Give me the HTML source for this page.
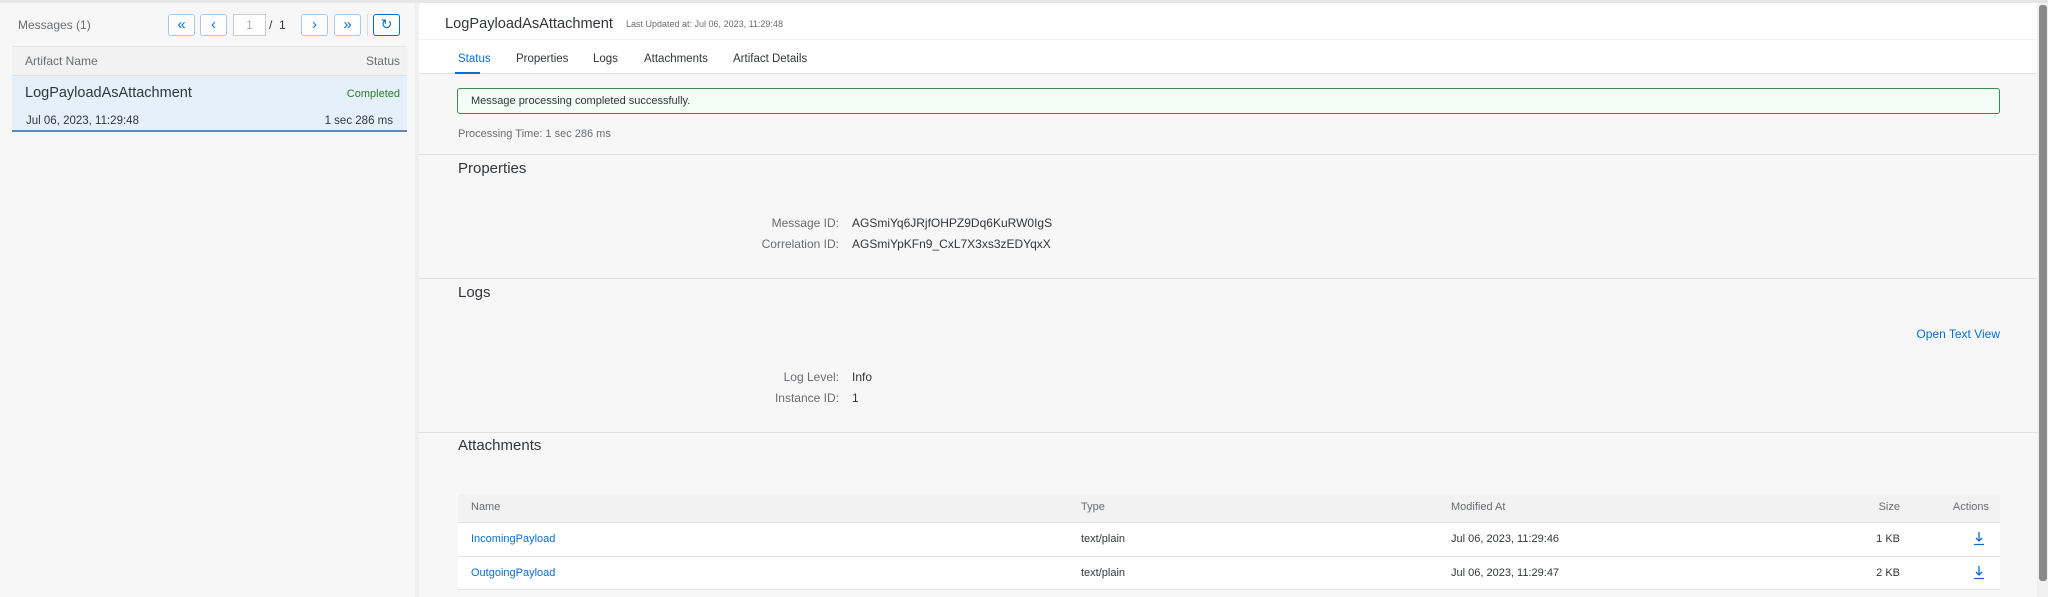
<!DOCTYPE html>
<html><head><meta charset="utf-8"><style>
*{margin:0;padding:0;box-sizing:border-box}
body{width:2048px;height:597px;overflow:hidden;background:#f7f7f7;font-family:"Liberation Sans",sans-serif;color:#32363a;position:relative;font-size:12px}
.a{position:absolute;white-space:nowrap}
.btn{position:absolute;top:14px;width:27px;height:22px;border:1px solid #a9c8e8;border-radius:3px;background:#fff;color:#0a6ed1;font-size:15px;text-align:center;line-height:19px}
.lbl{position:absolute;right:1209px;color:#6a6d70;font-size:12px;white-space:nowrap}
.val{position:absolute;left:852px;font-size:12px;white-space:nowrap}
.hr{position:absolute;left:419px;right:11px;height:1px;background:#e0e0e0}
.sec{position:absolute;left:458px;font-size:15px;color:#32363a}
.link{color:#0a6ed1}
</style></head><body>
<div class="a" style="left:0;top:0;width:2048px;height:3px;background:#e6e6e6"></div>
<!-- left panel -->
<div class="a" style="left:0;top:3px;width:415px;height:594px;background:#f7f7f7"></div>
<div class="a" style="left:415px;top:3px;width:4px;height:594px;background:#f0f0f0"></div>
<div class="a" style="left:18px;top:18px;font-size:12px;color:#6a6d70">Messages (1)</div>
<div class="btn" style="left:168px">«</div>
<div class="btn" style="left:200px">‹</div>
<div class="a" style="left:233px;top:14px;width:33px;height:22px;border:1px solid #ccc;background:#fff;color:#aaa;text-align:center;line-height:20px;font-size:12px">1</div>
<div class="a" style="left:269px;top:18px;font-size:12px">/&nbsp;&nbsp;1</div>
<div class="btn" style="left:301px">›</div>
<div class="btn" style="left:334px">»</div>
<div class="a" style="left:367px;top:14px;width:1px;height:22px;background:#ddd"></div>
<div class="btn" style="left:373px;border-color:#0a6ed1;font-size:14px">↻</div>
<div class="a" style="left:12px;top:46px;width:395px;height:30px;background:#f2f2f2;border-top:1px solid #e5e5e5;border-bottom:1px solid #e0e0e0"></div>
<div class="a" style="left:25px;top:54px;font-size:12px;color:#6a6d70">Artifact Name</div>
<div class="a" style="right:1648px;top:54px;font-size:12px;color:#6a6d70">Status</div>
<div class="a" style="left:12px;top:76px;width:395px;height:56px;background:#e5f0fa;border-bottom:2px solid #5a8cc0"></div>
<div class="a" style="left:25px;top:85px;font-size:14.5px">LogPayloadAsAttachment</div>
<div class="a" style="right:1648px;top:88px;font-size:11px;color:#2b7d2b">Completed</div>
<div class="a" style="left:26px;top:115px;font-size:11.5px">Jul 06, 2023, 11:29:48</div>
<div class="a" style="right:1655px;top:115px;font-size:11.5px">1 sec 286 ms</div>
<!-- right header -->
<div class="a" style="left:419px;top:3px;width:1618px;height:71px;background:#fff;border-bottom:1px solid #e0e0e0"></div>
<div class="a" style="left:419px;top:39px;width:1618px;height:1px;background:#f3f3f3"></div>
<div class="a" style="left:445px;top:16px;font-size:14.6px">LogPayloadAsAttachment</div>
<div class="a" style="left:626px;top:19px;font-size:9px;color:#6a6d70">Last Updated at: Jul 06, 2023, 11:29:48</div>
<div class="a" style="left:458px;top:53px;font-size:11.5px;color:#0a6ed1">Status</div>
<div class="a" style="left:455px;top:72px;width:25px;height:2px;background:#0a6ed1"></div>
<div class="a" style="left:516px;top:53px;font-size:11.5px">Properties</div>
<div class="a" style="left:593px;top:53px;font-size:11.5px">Logs</div>
<div class="a" style="left:644px;top:53px;font-size:11.5px">Attachments</div>
<div class="a" style="left:733px;top:53px;font-size:11.5px">Artifact Details</div>
<!-- status -->
<div class="a" style="left:457px;top:88px;width:1543px;height:26px;background:#f1fdf6;border:1px solid #3c8a52;border-radius:3px"></div>
<div class="a" style="left:471px;top:95px;font-size:11px">Message processing completed successfully.</div>
<div class="a" style="left:458px;top:128px;font-size:11px;color:#6a6d70">Processing Time: 1 sec 286 ms</div>
<div class="hr" style="top:154px"></div>
<div class="sec" style="top:160px">Properties</div>
<div class="lbl" style="top:216px">Message ID:</div><div class="val" style="top:216px">AGSmiYq6JRjfOHPZ9Dq6KuRW0IgS</div>
<div class="lbl" style="top:237px">Correlation ID:</div><div class="val" style="top:237px">AGSmiYpKFn9_CxL7X3xs3zEDYqxX</div>
<div class="hr" style="top:278px"></div>
<div class="sec" style="top:284px">Logs</div>
<div class="a link" style="right:48px;top:327px;font-size:12px">Open Text View</div>
<div class="lbl" style="top:370px">Log Level:</div><div class="val" style="top:370px">Info</div>
<div class="lbl" style="top:391px">Instance ID:</div><div class="val" style="top:391px">1</div>
<div class="hr" style="top:432px"></div>
<div class="sec" style="top:437px">Attachments</div>
<!-- table -->
<div class="a" style="left:458px;top:494px;width:1542px;height:29px;background:#f2f2f2;border-bottom:1px solid #e0e0e0"></div>
<div class="a" style="left:458px;top:523px;width:1542px;height:67px;background:#fff"></div>
<div class="a" style="left:458px;top:556px;width:1542px;height:1px;background:#e5e5e5"></div>
<div class="a" style="left:458px;top:589px;width:1542px;height:1px;background:#e5e5e5"></div>
<div class="a" style="left:471px;top:501px;font-size:11px;color:#6a6d70">Name</div>
<div class="a" style="left:1081px;top:501px;font-size:11px;color:#6a6d70">Type</div>
<div class="a" style="left:1451px;top:501px;font-size:11px;color:#6a6d70">Modified At</div>
<div class="a" style="right:148px;top:501px;font-size:11px;color:#6a6d70">Size</div>
<div class="a" style="right:59px;top:501px;font-size:11px;color:#6a6d70">Actions</div>
<div class="a link" style="left:471px;top:533px;font-size:11px">IncomingPayload</div>
<div class="a" style="left:1081px;top:533px;font-size:11px">text/plain</div>
<div class="a" style="left:1451px;top:533px;font-size:11px">Jul 06, 2023, 11:29:46</div>
<div class="a" style="right:148px;top:533px;font-size:11px">1 KB</div>
<div class="a link" style="left:471px;top:567px;font-size:11px">OutgoingPayload</div>
<div class="a" style="left:1081px;top:567px;font-size:11px">text/plain</div>
<div class="a" style="left:1451px;top:567px;font-size:11px">Jul 06, 2023, 11:29:47</div>
<div class="a" style="right:148px;top:567px;font-size:11px">2 KB</div>
<svg class="a" style="left:1973px;top:531px" width="12" height="15" viewBox="0 0 12 15"><path d="M6 1V10M3 7L6 10L9 7M1 13.5H11" stroke="#0a6ed1" stroke-width="1.3" fill="none"/></svg>
<svg class="a" style="left:1973px;top:565px" width="12" height="15" viewBox="0 0 12 15"><path d="M6 1V10M3 7L6 10L9 7M1 13.5H11" stroke="#0a6ed1" stroke-width="1.3" fill="none"/></svg>
<!-- scrollbar -->
<div class="a" style="left:2037px;top:3px;width:11px;height:594px;background:#f0f0f0"></div>
<div class="a" style="left:2039px;top:5px;width:8px;height:576px;background:#8a8a8a;border-radius:3px"></div>
</body></html>
